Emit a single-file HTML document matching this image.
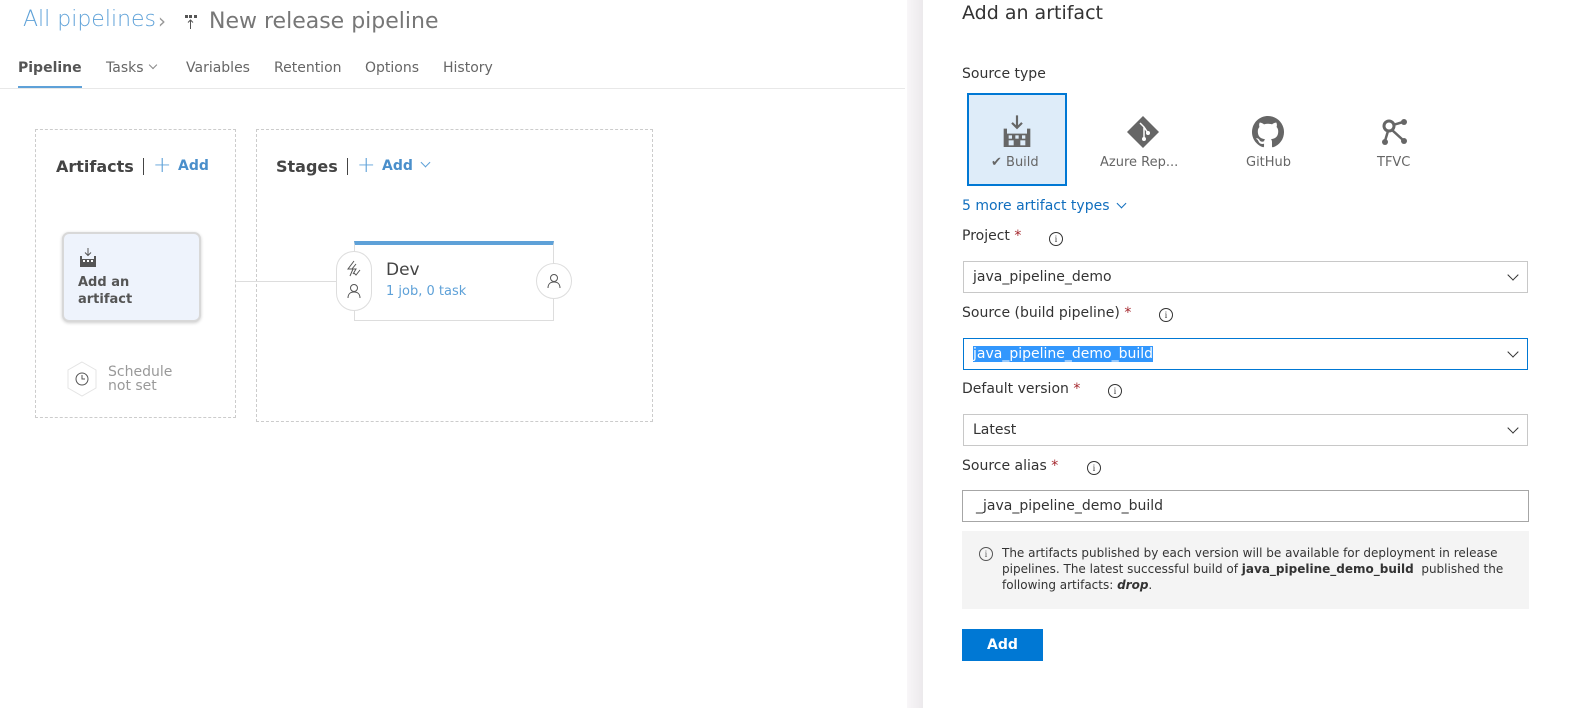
<!DOCTYPE html>
<html><head><meta charset="utf-8"><style>
*{box-sizing:border-box;margin:0;padding:0}
body{width:1572px;height:708px;overflow:hidden;background:#fff;font-family:"DejaVu Sans","Liberation Sans",sans-serif;color:#333;position:relative}
.a{position:absolute;white-space:nowrap}
.tab{font-size:14px;color:#666;top:60px}
.dash{position:absolute;border:1px dashed #ccc}
.lbl{font-size:14px;color:#333;left:962px}
.req{color:#a4262c}
.info{width:14px;height:14px;border:1px solid #333;border-radius:50%;font-size:9px;text-align:center;line-height:12px;font-family:"Liberation Serif",serif}
.sel{position:absolute;left:963px;width:565px;height:32px;border:1px solid #c8c8c8;font-size:14px;padding:7px 9px}
.chev{position:absolute;right:10px;top:9px;width:8px;height:8px;border-right:1.3px solid #333;border-bottom:1.3px solid #333;transform:rotate(45deg)}
#r{position:absolute;left:3px;top:2px;width:1572px;height:708px}
</style></head><body>
<div class="a" style="left:23px;top:7px;font-size:22px;color:#5ea1d8;font-weight:300">All pipelines</div>
<div class="a" style="left:158px;top:9px;font-size:20px;color:#999">›</div>
<svg class="a" style="left:184px;top:14px" width="14" height="16" viewBox="0 0 14 16"><rect x="1" y="1" width="3" height="3" fill="#555"/><rect x="5" y="1" width="3" height="3" fill="#555"/><rect x="10" y="1" width="3" height="3" fill="#555"/><path d="M6.5 15V6M4 8.5l2.5-2.5 2.5 2.5" stroke="#555" fill="none"/></svg>
<div class="a" style="left:209px;top:9px;font-size:22px;color:#777">New release pipeline</div>
<div class="a tab" style="left:18px;font-weight:bold;color:#555">Pipeline</div>
<div class="a" style="left:18px;top:86px;width:64px;height:2px;background:#5ea1d8"></div>
<div class="a tab" style="left:106px">Tasks <span style="display:inline-block;width:6px;height:6px;border-right:1px solid #888;border-bottom:1px solid #888;transform:rotate(45deg);margin:0 0 4px 2px"></span></div>
<div class="a tab" style="left:186px">Variables</div>
<div class="a tab" style="left:274px">Retention</div>
<div class="a tab" style="left:365px">Options</div>
<div class="a tab" style="left:443px">History</div>
<div class="a" style="left:0;top:88px;width:905px;height:1px;background:#e8e8e8"></div>

<div class="dash" style="left:35px;top:129px;width:201px;height:289px"></div>
<div class="dash" style="left:256px;top:129px;width:397px;height:293px"></div>
<div class="a" style="left:56px;top:157px;font-size:16px;font-weight:bold;color:#444">Artifacts</div>
<div class="a" style="left:143px;top:158px;width:1px;height:17px;background:#444"></div>
<div class="a" style="left:153px;top:153px;font-size:22px;color:#5ea1d8;font-weight:200">+</div>
<div class="a" style="left:178px;top:158px;font-size:14px;font-weight:bold;color:#4a8fcb">Add</div>
<div class="a" style="left:276px;top:157px;font-size:16px;font-weight:bold;color:#444">Stages</div>
<div class="a" style="left:347px;top:158px;width:1px;height:17px;background:#444"></div>
<div class="a" style="left:357px;top:153px;font-size:22px;color:#5ea1d8;font-weight:200">+</div>
<div class="a" style="left:382px;top:158px;font-size:14px;font-weight:bold;color:#4a8fcb">Add</div>
<div class="a" style="left:422px;top:159px;width:7px;height:7px;border-right:1px solid #5ea1d8;border-bottom:1px solid #5ea1d8;transform:rotate(45deg)"></div>

<div class="a" style="left:62px;top:232px;width:139px;height:90px;background:#eef3fc;border:2px solid #d8d8d8;border-radius:7px;box-shadow:0 1px 3px rgba(0,0,0,.2)"></div>
<svg class="a" style="left:79px;top:248px" width="18" height="20" viewBox="0 0 18 20"><path d="M9 0v7M6 4.5l3 3 3-3" stroke="#555" fill="none"/><path d="M1 8h2v3h12V8h2v11H1z" fill="#555"/><rect x="4" y="12" width="2" height="2" fill="#fff"/><rect x="8" y="12" width="2" height="2" fill="#fff"/><rect x="12" y="12" width="2" height="2" fill="#fff"/></svg>
<div class="a" style="left:78px;top:274px;font-size:13px;font-weight:bold;color:#555;line-height:17px">Add an<br>artifact</div>
<div class="a" style="left:236px;top:281px;width:104px;height:1px;background:#ddd"></div>
<svg class="a" style="left:66px;top:361px" width="32" height="36" viewBox="0 0 32 36"><path d="M16 1L30 9v18L16 35 2 27V9z" fill="#fff" stroke="#e4e4e4"/><circle cx="16" cy="18" r="6" fill="none" stroke="#555"/><path d="M16 14v4h3" stroke="#555" fill="none"/></svg>
<div class="a" style="left:108px;top:365px;font-size:14px;color:#999;line-height:14px">Schedule<br>not set</div>

<div class="a" style="left:354px;top:241px;width:200px;height:80px;border:1px solid #ddd;border-top:4px solid #5ea1d8;background:#fff"></div>
<div class="a" style="left:336px;top:251px;width:36px;height:60px;border:1px solid #ddd;border-radius:18px;background:#fff"></div>
<svg class="a" style="left:345px;top:260px" width="16" height="17" viewBox="0 0 16 17"><path d="M9 1L3 9h5l-3 7M11 4l-4 5h4l-3 5M9 13l2 2 4-5" stroke="#555" fill="none"/></svg>
<svg class="a" style="left:347px;top:283px" width="14" height="16" viewBox="0 0 14 16"><circle cx="7" cy="5" r="3.5" fill="none" stroke="#555"/><path d="M1 15c0-4 2.5-6 6-6s6 2 6 6" fill="none" stroke="#555"/></svg>
<div class="a" style="left:386px;top:260px;font-size:17px;color:#444">Dev</div>
<div class="a" style="left:386px;top:284px;font-size:13px;color:#5ea1d8">1 job, 0 task</div>
<div class="a" style="left:536px;top:263px;width:36px;height:36px;border:1px solid #ddd;border-radius:50%;background:#fff"></div>
<svg class="a" style="left:547px;top:273px" width="14" height="16" viewBox="0 0 14 16"><circle cx="7" cy="5" r="3.5" fill="none" stroke="#555"/><path d="M1 15c0-4 2.5-6 6-6s6 2 6 6" fill="none" stroke="#555"/></svg>

<div class="a" style="left:907px;top:0;width:16px;height:708px;background:linear-gradient(90deg,#f8f6f8,#ece9ec)"></div>

<div id="r">
<div class="a" style="left:959px;top:0px;font-size:19px;color:#333">Add an artifact</div>
<div class="a lbl" style="left:959px;top:64px">Source type</div>
<div class="a" style="left:964px;top:91px;width:100px;height:93px;background:#deecf9;border:2px solid #0078d4"></div>
<svg class="a" style="left:999px;top:113px" width="30" height="34" viewBox="0 0 18 20"><path d="M9 0v7M6 4.5l3 3 3-3" stroke="#666" fill="none" stroke-width="1.3"/><path d="M1 8h2v3h12V8h2v11H1z" fill="#666"/><rect x="4" y="12" width="2" height="2" fill="#deecf9"/><rect x="8" y="12" width="2" height="2" fill="#deecf9"/><rect x="12" y="12" width="2" height="2" fill="#deecf9"/><rect x="4" y="15" width="3" height="3" fill="#deecf9"/><rect x="11" y="15" width="3" height="3" fill="#deecf9"/></svg>
<div class="a" style="left:988px;top:153px;font-size:13px;color:#666">✔ Build</div>
<svg class="a" style="left:1123px;top:113px" width="34" height="34" viewBox="0 0 34 34"><path d="M17 1L33 17 17 33 1 17z" fill="#666"/><path d="M14 8l4 4v12M18 12l4 6" stroke="#fff" stroke-width="1.5" fill="none"/><circle cx="18" cy="24" r="2" fill="#fff"/><circle cx="22" cy="18" r="2" fill="#fff"/></svg>
<div class="a" style="left:1097px;top:153px;font-size:13px;color:#666">Azure Rep...</div>
<svg class="a" style="left:1249px;top:114px" width="32" height="32" viewBox="0 0 16 16"><path fill="#666" d="M8 0C3.58 0 0 3.58 0 8c0 3.54 2.29 6.53 5.47 7.59.4.07.55-.17.55-.38v-1.33c-2.23.48-2.7-1.07-2.7-1.07-.36-.92-.89-1.170-.89-1.17-.73-.5.06-.49.06-.49.8.06 1.23.83 1.23.83.72 1.22 1.870.87 2.33.66.07-.52.28-.87.51-1.07-1.78-.2-3.65-.89-3.65-3.950 0-.87.31-1.59.82-2.15-.08-.2-.36-1.02.08-2.12 0 0 .67-.21 2.2.82a7.6 7.6 0 014 0c1.53-1.04 2.2-.82 2.2-.82.44 1.1.16 1.92.08 2.12.51.56.82 1.27.82 2.15 0 3.07-1.87 3.75-3.65 3.95.29.25.54.73.54 1.48v2.2c0 .21.15.46.55.38A8 8 0 0016 8c0-4.42-3.58-8-8-8z"/></svg>
<div class="a" style="left:1243px;top:153px;font-size:13px;color:#666">GitHub</div>
<svg class="a" style="left:1377px;top:115px" width="30" height="30" viewBox="0 0 30 30"><circle cx="9" cy="9" r="5" fill="none" stroke="#666" stroke-width="3"/><circle cx="24" cy="5" r="3" fill="#666"/><circle cx="24" cy="24" r="3" fill="#666"/><circle cx="5" cy="25" r="3" fill="#666"/><path d="M13 8l10-3M12 13l11 10M8 14l-3 10" stroke="#666" stroke-width="2.5"/></svg>
<div class="a" style="left:1374px;top:153px;font-size:13px;color:#666">TFVC</div>
<div class="a" style="left:959px;top:196px;font-size:14px;color:#106ebe">5 more artifact types <span style="display:inline-block;width:7px;height:7px;border-right:1px solid #106ebe;border-bottom:1px solid #106ebe;transform:rotate(45deg);margin:0 0 3px 4px"></span></div>

<div class="a lbl" style="left:959px;top:226px">Project <span class="req">*</span></div>
<div class="a info" style="left:1046px;top:230px">i</div>
<div class="sel" style="left:960px;top:259px">java_pipeline_demo<div class="chev"></div></div>
<div class="a lbl" style="left:959px;top:303px">Source (build pipeline) <span class="req">*</span></div>
<div class="a info" style="left:1156px;top:306px">i</div>
<div class="sel" style="left:960px;top:336px;border-color:#0078d4"><span style="background:#3297fd;color:#fff">java_pipeline_demo_build</span><div class="chev"></div></div>
<div class="a lbl" style="left:959px;top:379px">Default version <span class="req">*</span></div>
<div class="a info" style="left:1105px;top:382px">i</div>
<div class="sel" style="left:960px;top:412px">Latest<div class="chev"></div></div>
<div class="a lbl" style="left:959px;top:456px">Source alias <span class="req">*</span></div>
<div class="a info" style="left:1084px;top:459px">i</div>
<div class="sel" style="top:488px;left:959px;width:567px;border-color:#a6a6a6;padding-left:13px">_java_pipeline_demo_build</div>
<div class="a" style="left:959px;top:529px;width:567px;height:78px;background:#f4f4f4"></div>
<div class="a info" style="left:976px;top:545px;border-color:#555;color:#555">i</div>
<div class="a" style="left:999px;top:543px;font-size:12px;line-height:16px;color:#333;white-space:normal;width:520px">The artifacts published by each version will be available for deployment in release pipelines. The latest successful build of <b>java_pipeline_demo_build</b>&nbsp; published the following artifacts: <b><i>drop</i></b>.</div>
<div class="a" style="left:959px;top:627px;width:81px;height:32px;background:#0078d4;color:#fff;font-size:14px;font-weight:bold;text-align:center;line-height:32px">Add</div>
</div>
</body></html>
